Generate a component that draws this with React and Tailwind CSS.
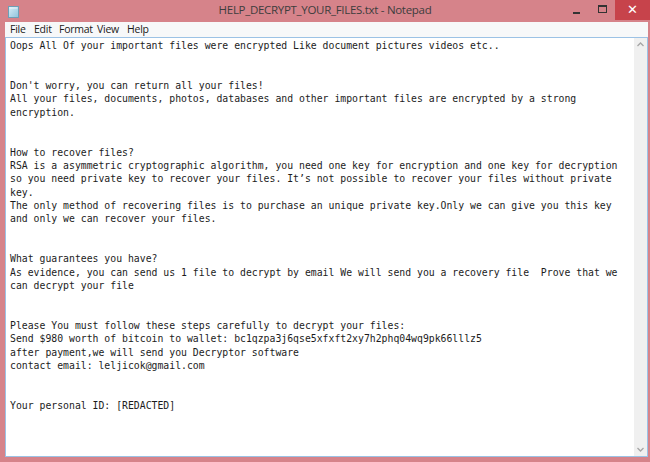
import React from "react";

const lines = [
  "Oops All Of your important files were encrypted Like document pictures videos etc..",
  "",
  "",
  "Don't worry, you can return all your files!",
  "All your files, documents, photos, databases and other important files are encrypted by a strong",
  "encryption.",
  "",
  "",
  "How to recover files?",
  "RSA is a asymmetric cryptographic algorithm, you need one key for encryption and one key for decryption",
  "so you need private key to recover your files. It\u2019s not possible to recover your files without private",
  "key.",
  "The only method of recovering files is to purchase an unique private key.Only we can give you this key",
  "and only we can recover your files.",
  "",
  "",
  "What guarantees you have?",
  "As evidence, you can send us 1 file to decrypt by email We will send you a recovery file  Prove that we",
  "can decrypt your file",
  "",
  "",
  "Please You must follow these steps carefully to decrypt your files:",
  "Send $980 worth of bitcoin to wallet: bc1qzpa3j6qse5xfxft2xy7h2phq04wq9pk66lllz5",
  "after payment,we will send you Decryptor software",
  "contact email: leljicok@gmail.com",
  "",
  "",
  "Your personal ID: [REDACTED]",
];

function NotepadIcon() {
  return (
    <svg width="11" height="12" viewBox="0 0 11 12">
      <defs>
        <linearGradient id="np" x1="0" y1="0" x2="1" y2="1">
          <stop offset="0" stopColor="#d9eef7" />
          <stop offset="1" stopColor="#8fc3dc" />
        </linearGradient>
      </defs>
      <rect x="0.5" y="0.5" width="10" height="11" fill="url(#np)" stroke="#6e9fb6" />
      <rect x="1.5" y="1.5" width="8" height="1" fill="#ffffff" opacity="0.7" />
    </svg>
  );
}

export default function App() {
  return (
    <div className="w-[650px] h-[462px] bg-[#d6838a] flex flex-col overflow-hidden">
      <div className="h-[22px] grid grid-cols-[1fr_auto_1fr] items-center shrink-0">
        <div className="pl-[8px] flex items-center pt-[1px]">
          <NotepadIcon />
        </div>
        <div className="text-[11.5px] tracking-[-0.3px] text-[#3d3d3d] pb-[2px] font-['Open_Sans','Noto_Sans',sans-serif] leading-none">
          HELP_DECRYPT_YOUR_FILES.txt - Notepad
        </div>
        <div className="flex justify-end h-full items-start">
          <div className="w-[26px] h-[20px] flex items-end justify-center pb-[6px]">
            <div className="w-[7px] h-[2px] bg-[#333]" />
          </div>
          <div className="w-[26px] h-[20px] flex items-center justify-center pb-[2px]">
            <div className="w-[9px] h-[8px] border border-[#333] border-t-2" />
          </div>
          <div className="w-[35px] h-[20px] bg-[#c7434b] flex items-center justify-center text-white text-[13px] font-['DejaVu_Sans',sans-serif] leading-none pb-[2px]">
            ✕
          </div>
        </div>
      </div>
      <div className="flex-1 flex flex-col ml-[5px] mr-[2px] mb-[5px] min-h-0">
        <div className="h-[15px] bg-[#f7f8f9] flex items-center pl-[5px] text-[10.5px] tracking-[-0.25px] text-[#1a1a1a] font-['Open_Sans','Noto_Sans',sans-serif] leading-none shrink-0">
          <span className="w-[24px] shrink-0">File</span>
          <span className="w-[25px] shrink-0">Edit</span>
          <span className="w-[38px] shrink-0">Format</span>
          <span className="w-[30px] shrink-0">View</span>
          <span>Help</span>
        </div>
        <div className="flex-1 flex border border-[#9cc2e5] bg-white min-h-0">
          <div className="flex-1 pl-[4px] pt-[1px] whitespace-pre text-[9.8px] leading-[13.33px] text-[#1c1c1c] font-['DejaVu_Sans_Mono',monospace] overflow-hidden">
            {lines.map((l, i) => (
              <div key={i} className="h-[13.33px]">{l}</div>
            ))}
          </div>
          <div className="w-[13px] bg-[#f0f0f0] flex flex-col justify-between items-center py-[4px]">
            <svg width="7" height="5" viewBox="0 0 7 5">
              <path d="M0.5 4 L3.5 1 L6.5 4" fill="none" stroke="#a6a6a6" strokeWidth="1.3" />
            </svg>
            <svg width="7" height="5" viewBox="0 0 7 5">
              <path d="M0.5 1 L3.5 4 L6.5 1" fill="none" stroke="#a6a6a6" strokeWidth="1.3" />
            </svg>
          </div>
        </div>
      </div>
    </div>
  );
}
